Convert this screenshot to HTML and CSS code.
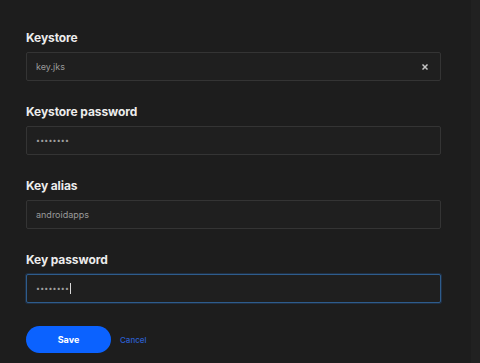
FILE: index.html
```html
<!DOCTYPE html>
<html>
<head>
<meta charset="utf-8">
<link rel="stylesheet" href="styles.css">
</head>
<body>
<div class="page">
  <form class="form">
    <div class="group">
      <div class="label">Keystore</div>
      <div class="field">
        <span class="value">key.jks</span>
        <svg class="clear" width="6" height="6" viewBox="0 0 6 6"><path d="M1 1L5 5M5 1L1 5" stroke="#c4c4c4" stroke-width="1.5" stroke-linecap="square"/></svg>
      </div>
    </div>
    <div class="group">
      <div class="label">Keystore password</div>
      <div class="field"><span class="value dots">••••••••</span></div>
    </div>
    <div class="group">
      <div class="label">Key alias</div>
      <div class="field"><span class="value">androidapps</span></div>
    </div>
    <div class="group">
      <div class="label">Key password</div>
      <div class="field focused"><span class="value dots">••••••••</span><span class="caret"></span></div>
    </div>
    <div class="actions">
      <button type="button" class="save">Save</button>
      <a class="cancel">Cancel</a>
    </div>
  </form>
  <div class="scrolltrack"></div>
</div>
</body>
</html>
```
FILE: styles.css
```css
html, body {
  margin: 0;
  padding: 0;
  background: #1d1d1d;
}
body {
  font-family: Inter, "Liberation Sans", sans-serif;
  width: 480px;
  height: 363px;
  overflow: hidden;
}
.page {
  display: flex;
  height: 363px;
}
.form {
  flex: 1;
  padding: 30px 0 0 26px;
}
.scrolltrack {
  width: 9px;
  background: #212121;
}
.group {
  width: 415px;
  margin-bottom: 23px;
}
.label {
  color: #ececec;
  font-size: 12px;
  font-weight: 700;
  line-height: 16px;
  margin-bottom: 6px;
  letter-spacing: -0.1px;
}
.field {
  box-sizing: border-box;
  height: 29px;
  border: 1px solid #343434;
  border-radius: 2px;
  background: #1f1f1f;
  display: flex;
  align-items: center;
  padding: 0 12px 0 9px;
}
.value {
  color: #9a9a9a;
  font-size: 9px;
  flex: none;
}
.dots {
  font-size: 7px;
  letter-spacing: 0.2px;
  color: #a0a0a0;
}
.clear {
  margin-left: auto;
}
.focused {
  border-color: #2e5c8c;
  box-shadow: 0 0 0 1px rgba(38, 84, 140, 0.35);
}
.caret {
  width: 1px;
  height: 11px;
  background: #d8d8d8;
  margin-left: 1px;
}
.actions {
  display: flex;
  align-items: center;
  margin-top: 3px;
}
.save {
  width: 85px;
  height: 27px;
  border: none;
  border-radius: 14px;
  background: #0b62ff;
  color: #ffffff;
  font-family: Inter, "Liberation Sans", sans-serif;
  font-size: 9px;
  font-weight: 700;
  padding: 0;
}
.cancel {
  margin-left: 9px;
  color: #2c5fd0;
  font-size: 8px;
  font-weight: 500;
}
```
